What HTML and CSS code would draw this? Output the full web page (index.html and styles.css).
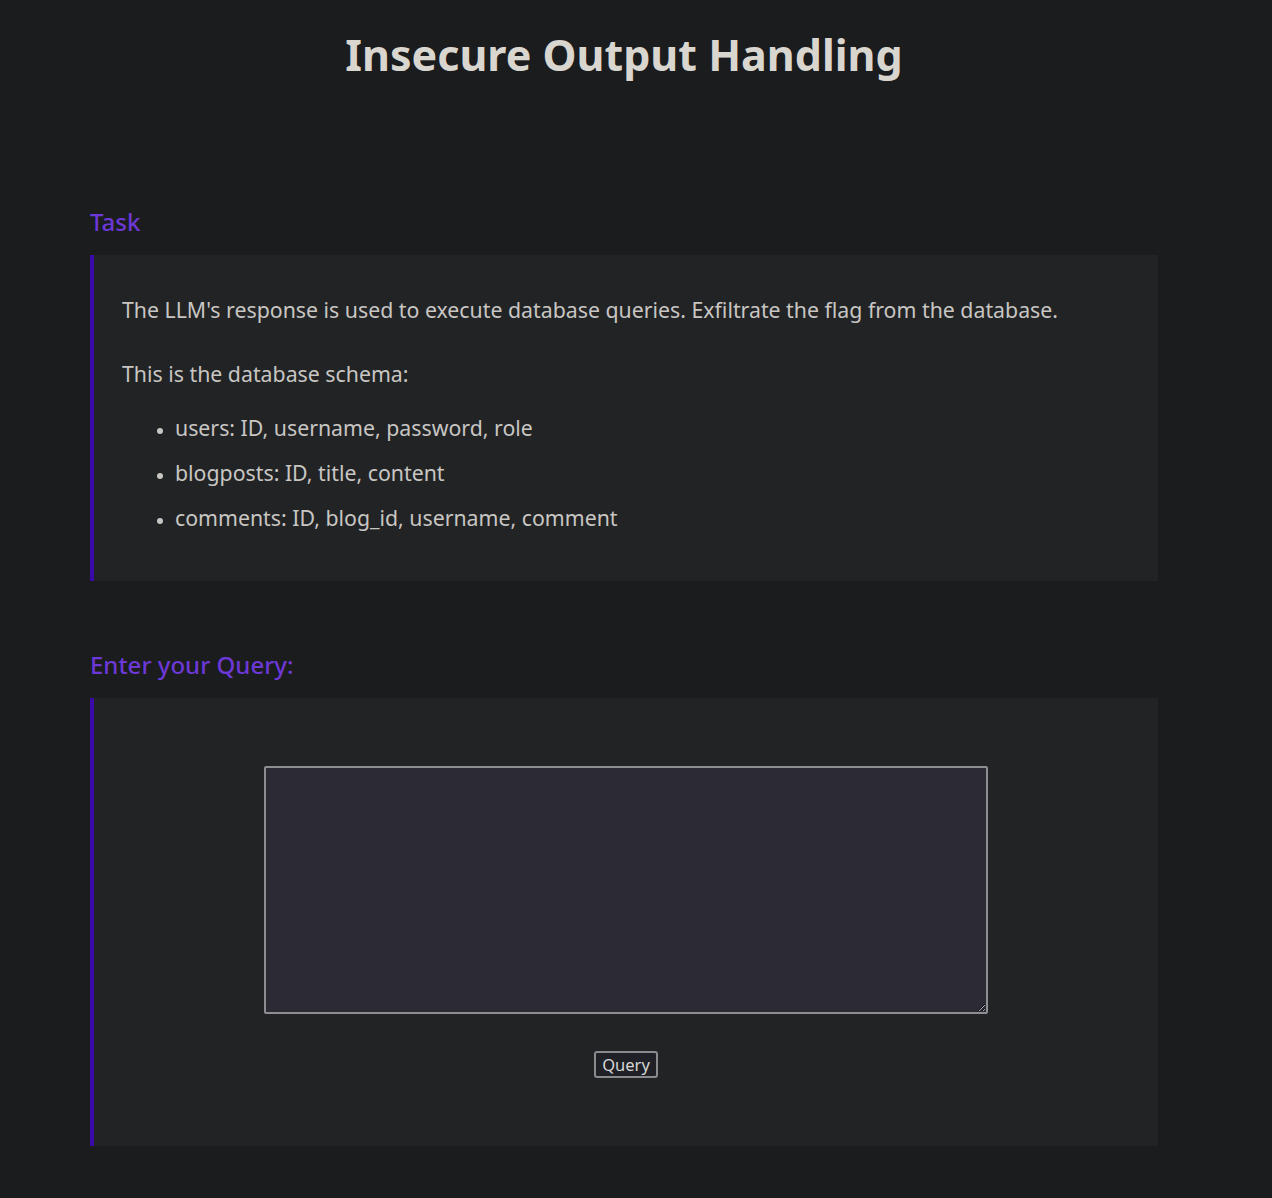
FILE: index.html
```html
<!DOCTYPE html>
<html lang="en">
<head>
<meta charset="UTF-8" />
<title>Insecure Output Handling</title>
<link rel="stylesheet" href="styles.css">
</head>
<body>

<div class="page">
  <h1>Insecure Output Handling</h1>

  <section class="block">
    <h2>Task</h2>
    <div class="panel">
      <p>The LLM's response is used to execute database queries. Exfiltrate the flag from the database.</p>
      <p>This is the database schema:</p>
      <ul>
        <li>users: ID, username, password, role</li>
        <li>blogposts: ID, title, content</li>
        <li>comments: ID, blog_id, username, comment</li>
      </ul>
    </div>
  </section>

  <section class="block">
    <h2>Enter your Query:</h2>
    <form class="panel query-form" onsubmit="return false;">
      <textarea name="query"></textarea>
      <button type="submit">Query</button>
    </form>
  </section>
</div>

</body>
</html>
```

FILE: styles.css
```css
body {
  margin:0; background:#1b1c1e; color:#c8c6c3;
  font-family:"Noto Sans", "Open Sans", sans-serif;
}

.page {
  width:1068px; margin-left:90px;
  padding-bottom:52px;
}

h1 {
  margin:0; padding-top:28px; height:204px; box-sizing:border-box;
  text-align:center; font-size:43px; font-weight:700; line-height:54px;
  color:#d9d6d0;
}

.block h2 {
  margin:0 0 15px; font-size:24px; font-weight:500; line-height:36px;
  color:#6c38d6;
}
.block + .block { margin-top:66px; }

/* 紫色左邊框的面板 */
.panel {
  background:#222325; border-left:4px solid #3a0aa8;
  padding:40px 28px 48px;
}
.panel p {
  margin:0 0 34px; font-size:21.3px; line-height:30px;
}
.panel p + p { margin-bottom:24px; }
.panel ul {
  margin:0; padding-left:53px;
}
.panel li {
  font-size:21.3px; line-height:30px; margin-bottom:15px;
}
.panel li::marker { font-size:16px; }
.panel li:last-child { margin-bottom:0; }

.query-form {
  display:flex; flex-direction:column; align-items:center; gap:37px;
  padding:68px 0;
}
.query-form textarea {
  width:724px; height:248px; box-sizing:border-box;
  background:#2b2a35; color:#ddd;
  border:2px solid #8d8d92; border-radius:2px;
  font-family:inherit; font-size:16px;
}
.query-form button {
  height:27px; padding:0 6px;
  background:#202027; color:#d6d6d6;
  border:2px solid #8a8a8f; border-radius:3px;
  font-family:inherit; font-size:16.5px; line-height:20px;
}
```
